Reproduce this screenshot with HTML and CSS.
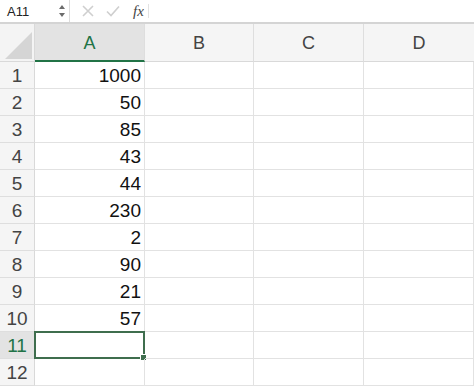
FILE: index.html
```html
<!DOCTYPE html>
<html>
<head>
<meta charset="utf-8">
<link rel="stylesheet" href="styles.css">
</head>
<body>
<div class="app">
  <div class="fbar">
    <div class="namebox">
      <span class="name">A11</span>
      <svg class="spin" width="8" height="14" viewBox="0 0 8 14"><path d="M1 5 L4 1 L7 5 Z" fill="#6b6b6b"/><path d="M1 9 L4 13 L7 9 Z" fill="#6b6b6b"/></svg>
    </div>
    <div class="ficons">
      <svg class="ico" width="14" height="14" viewBox="0 0 14 14"><path d="M2 2 L12 12 M12 2 L2 12" stroke="#cfcfcf" stroke-width="1.6" fill="none"/></svg>
      <svg class="ico" width="16" height="14" viewBox="0 0 16 14"><path d="M2 7.5 L6 11.5 L14 2.5" stroke="#cfcfcf" stroke-width="1.6" fill="none"/></svg>
      <span class="fx">fx</span>
      <span class="sep"></span>
    </div>
    <div class="finput"></div>
  </div>
  <div class="grid">
    <div class="corner"><svg width="30" height="31" viewBox="0 0 30 31"><path d="M28 2 L28 29 L1 29 Z" fill="#d5d5d5"/></svg></div>
    <div class="ch sel">A</div>
    <div class="ch">B</div>
    <div class="ch">C</div>
    <div class="ch last">D</div>

    <div class="rh">1</div><div class="c num">1000</div><div class="c"></div><div class="c"></div><div class="c"></div>
    <div class="rh">2</div><div class="c num">50</div><div class="c"></div><div class="c"></div><div class="c"></div>
    <div class="rh">3</div><div class="c num">85</div><div class="c"></div><div class="c"></div><div class="c"></div>
    <div class="rh">4</div><div class="c num">43</div><div class="c"></div><div class="c"></div><div class="c"></div>
    <div class="rh">5</div><div class="c num">44</div><div class="c"></div><div class="c"></div><div class="c"></div>
    <div class="rh">6</div><div class="c num">230</div><div class="c"></div><div class="c"></div><div class="c"></div>
    <div class="rh">7</div><div class="c num">2</div><div class="c"></div><div class="c"></div><div class="c"></div>
    <div class="rh">8</div><div class="c num">90</div><div class="c"></div><div class="c"></div><div class="c"></div>
    <div class="rh">9</div><div class="c num">21</div><div class="c"></div><div class="c"></div><div class="c"></div>
    <div class="rh">10</div><div class="c num">57</div><div class="c"></div><div class="c"></div><div class="c"></div>
    <div class="rh rsel">11</div><div class="c active"><span class="handle"></span></div><div class="c"></div><div class="c"></div><div class="c"></div>
    <div class="rh">12</div><div class="c"></div><div class="c"></div><div class="c"></div><div class="c"></div>
  </div>
</div>
</body>
</html>
```

FILE: styles.css
```css
html, body {
  margin: 0;
  padding: 0;
  background: #ffffff;
}
body {
  font-family: "Liberation Sans", Arial, sans-serif;
  width: 474px;
  height: 386px;
  overflow: hidden;
}
.app {
  width: 474px;
}
.fbar {
  display: flex;
  height: 22px;
  border-bottom: 2px solid #d4d4d4;
  background: #ffffff;
}
.namebox {
  width: 70px;
  box-sizing: border-box;
  border-right: 1px solid #dcdcdc;
  display: flex;
  align-items: center;
  justify-content: space-between;
  padding: 0 3px 0 7px;
}
.name {
  font-size: 13px;
  color: #222;
}
.spin {
  display: block;
}
.ficons {
  display: flex;
  align-items: center;
  width: 82px;
  padding-left: 11px;
  box-sizing: border-box;
}
.ico {
  display: block;
  margin-right: 10px;
}
.fx {
  font-family: "Liberation Serif", "Times New Roman", serif;
  font-style: italic;
  font-size: 15px;
  color: #444;
  margin-left: 2px;
}
.sep {
  width: 1px;
  height: 14px;
  background: #e2e2e2;
  margin-left: 4px;
}
.finput {
  flex: 1;
}
.grid {
  display: grid;
  grid-template-columns: 35px 110px 109px 110px 110px;
  grid-template-rows: 38px repeat(12, 27px);
}
.corner {
  background: #f4f4f4;
  border-right: 1px solid #d9d9d9;
  border-bottom: 1px solid #d9d9d9;
  box-sizing: border-box;
  display: flex;
  align-items: flex-end;
  justify-content: flex-end;
}
.corner svg {
  display: block;
}
.ch {
  background: #f5f5f5;
  border-right: 1px solid #dedede;
  border-bottom: 1px solid #d9d9d9;
  box-sizing: border-box;
  display: flex;
  align-items: center;
  justify-content: center;
  font-size: 18px;
  color: #444;
  padding-top: 2px;
}
.ch.last {
  border-right: none;
}
.ch.sel {
  background: #e3e3e3;
  color: #217346;
  border-bottom: 2px solid #217346;
}
.rh {
  background: #f5f5f5;
  border-right: 1px solid #d9d9d9;
  border-bottom: 1px solid #dedede;
  box-sizing: border-box;
  display: flex;
  align-items: center;
  justify-content: center;
  font-size: 19px;
  color: #444;
  padding-top: 1px;
}
.rh.rsel {
  background: #e3e3e3;
  color: #217346;
}
.c {
  border-right: 1px solid #e2e2e2;
  border-bottom: 1px solid #e2e2e2;
  box-sizing: border-box;
  font-size: 19px;
  color: #111;
  display: flex;
  align-items: center;
  justify-content: flex-end;
  padding-right: 3px;
  padding-top: 1px;
  position: relative;
}
.c.active {
  border: 2px solid #3f6e4e;
  margin: -1px 0 0 -1px;
}
.handle {
  position: absolute;
  right: -4px;
  bottom: -4px;
  width: 5px;
  height: 5px;
  background: #3f6e4e;
  border: 1px solid #ffffff;
}
```
